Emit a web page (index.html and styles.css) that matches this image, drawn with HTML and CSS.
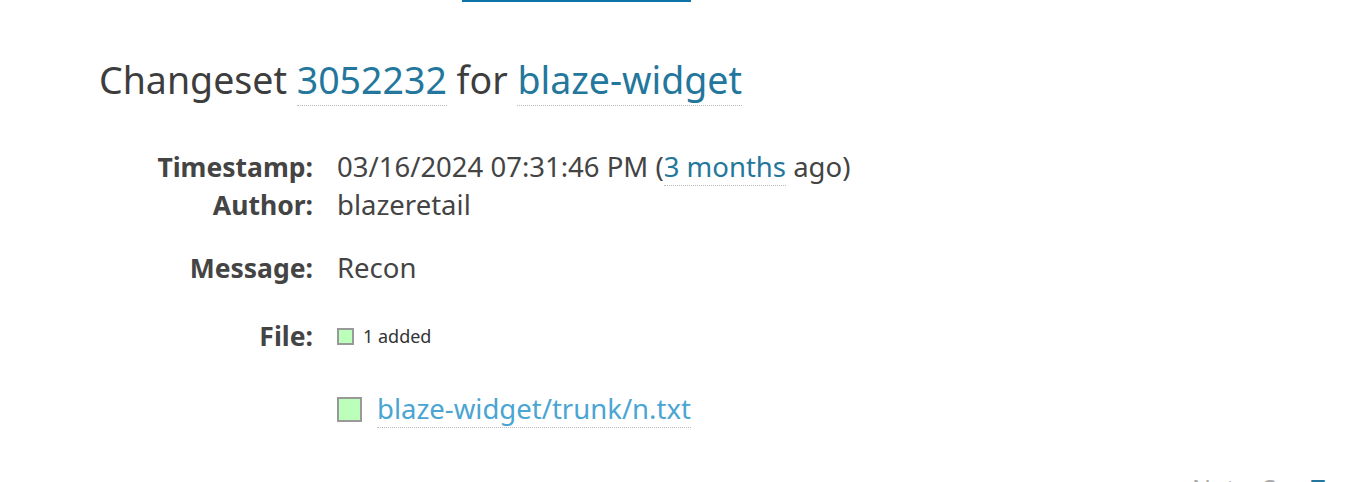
FILE: index.html
```html
<!DOCTYPE html>
<html lang="en">
<head>
<meta charset="utf-8">
<title>Changeset 3052232 for blaze-widget</title>
<link rel="stylesheet" href="styles.css">
</head>
<body>
<div class="topnav"><span class="active-tab"></span></div>
<main class="content">
  <h1 class="title">Changeset <a href="#" class="link">3052232</a> for <a href="#" class="link">blaze-widget</a></h1>
  <dl class="props">
    <dt class="label">Timestamp:</dt>
    <dd class="value">03/16/2024 07:31:46 PM (<a href="#" class="link">3 months</a> ago)</dd>
    <dt class="label">Author:</dt>
    <dd class="value">blazeretail</dd>
    <dt class="label gap-msg">Message:</dt>
    <dd class="value gap-msg">Recon</dd>
    <dt class="label gap-file">File:</dt>
    <dd class="value gap-file"><span class="legend"><span class="sq sq-small"></span>1 added</span></dd>
  </dl>
  <ul class="files">
    <li class="file"><span class="sq sq-big"></span><a href="#" class="file-link">blaze-widget/trunk/n.txt</a></li>
  </ul>
</main>
<footer class="help">Note: See <a href="#" class="help-link">TracChangeset</a> for help on using the changeset viewer.</footer>
</body>
</html>
```
FILE: styles.css
```css
html, body {
  margin: 0;
  padding: 0;
  background: #fff;
  overflow: hidden;
}
body {
  font-family: "Noto Sans", "Open Sans", sans-serif;
  color: #444;
  width: 1348px;
  height: 482px;
  position: relative;
}
.topnav {
  height: 3px;
  display: flex;
  padding-left: 462px;
}
.active-tab {
  display: block;
  width: 229px;
  height: 2px;
  background: #0e73a6;
}
.content {
  padding-left: 99px;
}
.title {
  margin: 53px 0 0 0;
  font-weight: 400;
  font-size: 37.5px;
  line-height: 48px;
  color: #3d3d3d;
}
.link {
  color: #24779c;
  text-decoration: none;
  border-bottom: 1px dotted #bbb;
}
.props {
  display: grid;
  grid-template-columns: 214px auto;
  column-gap: 24px;
  margin: 44px 0 0 0;
  font-size: 27.5px;
  line-height: 38px;
}
.label {
  grid-column: 1;
  text-align: right;
  font-weight: 700;
  font-size: 26.5px;
  color: #444;
  margin: 0;
}
.value {
  grid-column: 2;
  margin: 0;
  color: #444;
}
.value .link {
  display: inline-block;
  line-height: 37px;
}
.gap-msg { margin-top: 25px; }
.gap-file { margin-top: 30px; }
.legend {
  display: inline-flex;
  align-items: center;
  font-size: 18px;
  color: #333;
  gap: 9px;
  vertical-align: 3px;
}
.sq {
  display: inline-block;
  box-sizing: border-box;
  background: #bfb;
  border: 2px solid #999;
}
.sq-small { width: 17px; height: 17px; }
.sq-big { width: 25px; height: 25px; }
.files {
  list-style: none;
  margin: 34px 0 0 238px;
  padding: 0;
}
.file {
  display: flex;
  align-items: center;
  gap: 15px;
  font-size: 27.5px;
  line-height: 34px;
}
.file-link {
  color: #4aa5d2;
  text-decoration: none;
  border-bottom: 1px dotted #bbb;
  line-height: 36px;
}
.help {
  position: absolute;
  left: 1192px;
  top: 476px;
  font-size: 25px;
  line-height: 25px;
  color: #aaa;
  width: 156px;
  white-space: nowrap;
  overflow: hidden;
}
.help-link {
  color: #24779c;
  text-decoration: none;
}
```
